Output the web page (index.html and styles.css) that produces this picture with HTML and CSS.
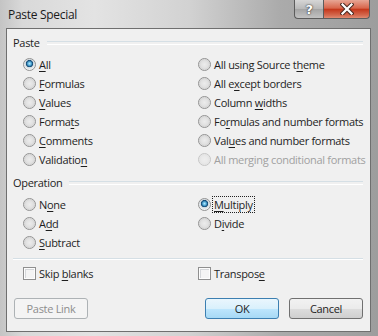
FILE: index.html
```html
<!DOCTYPE html>
<html lang="en">
<head>
  <meta charset="UTF-8">
  <title>Paste Special</title>
  <link rel="stylesheet" href="styles.css">
</head>
<body>
  <div class="window">
    <div class="titlebar">
      <span class="title">Paste Special</span>
      <div class="caption-btns">
        <span class="cap help">?</span>
        <span class="cap close">
          <svg width="14" height="12" viewBox="0 0 14 12">
            <path d="M2.5 1.5 L11.5 10.5 M11.5 1.5 L2.5 10.5" stroke="#4a2a22" stroke-width="4.2" stroke-linecap="square"/>
            <path d="M2.5 1.5 L11.5 10.5 M11.5 1.5 L2.5 10.5" stroke="#fff" stroke-width="2.2" stroke-linecap="square"/>
          </svg>
        </span>
      </div>
    </div>
    <div class="client">
      <div class="group-head"><span>Paste</span></div>
      <div class="opts paste-opts">
        <label class="opt"><span class="radio on"></span><span><u>A</u>ll</span></label>
        <label class="opt"><span class="radio"></span><span><u>F</u>ormulas</span></label>
        <label class="opt"><span class="radio"></span><span><u>V</u>alues</span></label>
        <label class="opt"><span class="radio"></span><span>Forma<u>t</u>s</span></label>
        <label class="opt"><span class="radio"></span><span><u>C</u>omments</span></label>
        <label class="opt"><span class="radio"></span><span>Validatio<u>n</u></span></label>
        <label class="opt"><span class="radio"></span><span>All using Source t<u>h</u>eme</span></label>
        <label class="opt"><span class="radio"></span><span>All e<u>x</u>cept borders</span></label>
        <label class="opt"><span class="radio"></span><span>Column <u>w</u>idths</span></label>
        <label class="opt"><span class="radio"></span><span>Fo<u>r</u>mulas and number formats</span></label>
        <label class="opt"><span class="radio"></span><span>Val<u>u</u>es and number formats</span></label>
        <label class="opt disabled"><span class="radio"></span><span>All merging conditional formats</span></label>
      </div>

      <div class="group-head op-head"><span>Operation</span></div>
      <div class="opts op-opts">
        <label class="opt"><span class="radio"></span><span>N<u>o</u>ne</span></label>
        <label class="opt"><span class="radio"></span><span>A<u>d</u>d</span></label>
        <label class="opt"><span class="radio"></span><span><u>S</u>ubtract</span></label>
        <label class="opt"><span class="radio on"></span><span class="focus"><u>M</u>ultiply</span></label>
        <label class="opt"><span class="radio"></span><span>D<u>i</u>vide</span></label>
      </div>

      <div class="sep"></div>
      <div class="opts checks">
        <label class="opt"><span class="check"></span><span>Skip <u>b</u>lanks</span></label>
        <label class="opt"><span class="check"></span><span>Transpos<u>e</u></span></label>
      </div>

      <div class="btn-row">
        <button class="btn" disabled>Paste Link</button>
        <button class="btn default">OK</button>
        <button class="btn">Cancel</button>
      </div>
    </div>
  </div>
</body>
</html>
```

FILE: styles.css
```css
* {margin:0; padding:0; box-sizing:border-box;}
body {width:378px; height:336px; overflow:hidden; font-family:"Open Sans", "Noto Sans", sans-serif; font-size:11px; letter-spacing:-0.3px; color:#1e1e1e;}

.window {width:378px; height:336px; display:flex; flex-direction:column; background:linear-gradient(to right, #c4c4c4 0, #d9d9d9 6%, #e3e3e3 25%, #d2d2d2 50%, #ababab 74%, #9d9d9d 100%);}

.titlebar {height:28px; display:flex; align-items:flex-start; padding-left:8px;}
.title {font-size:12px; line-height:16px; margin-top:7px; color:#1a1a1a;}
.caption-btns {display:flex; margin-left:auto; margin-right:8px; height:19px;}
.cap {display:flex; align-items:center; justify-content:center; height:19px; border:1px solid #5c5c5c; border-top:0;}
.help {width:29px; border-radius:0 0 0 4px; border-right:0; background:linear-gradient(#d6d6d6, #b8b8b8 50%, #a4a4a4 51%, #c2c2c2); color:#fff; font:bold 13px "DejaVu Sans", sans-serif; text-shadow:0 0 2px #333, 0 0 1px #333;}
.close {width:47px; border-radius:0 0 4px 0; background:linear-gradient(#e7a695, #d8664c 45%, #c5381c 52%, #d46a50 85%, #e08b72);}

.client {flex:1; margin:0 7px 4px 6px; border:1px solid #6f6f6f; background:#f0f0f0; padding:6px 7px 0 0;}

.group-head {display:flex; align-items:center; gap:7px; padding-left:6px; height:16px; line-height:16px;}
.group-head::after {content:''; flex:1; height:2px; border-top:1px solid #d5dfe5; border-bottom:1px solid #fff;}
.op-head {margin-top:6px;}

.opts {display:grid; grid-template-columns:175px 1fr; grid-auto-flow:column; padding-left:16px;}
.paste-opts {grid-template-rows:repeat(6, 19px); margin-top:4px;}
.op-opts {grid-template-rows:repeat(3, 19px); margin-top:4px;}
.checks {grid-template-rows:19px; margin-top:4px;}

.opt {display:flex; align-items:center; gap:3px; line-height:15px; white-space:nowrap;}
.opt u {text-decoration:underline; text-underline-offset:2px;}
.opt.disabled {color:#a0a0a0;}
.opt.disabled .radio {opacity:.45;}
.focus {outline:1px dotted #222; padding:0 1px; margin-left:-1px;}

.radio {width:13px; height:13px; flex:none; border-radius:50%; border:1px solid #929292; background:radial-gradient(circle at 50% 50%, #ececec 0, #e0e0e0 50%, #d4d4d4 62%, #fdfdfd 78%);}
.radio.on {background:radial-gradient(circle at 50% 42%, #b8ecff 0, #52a9d6 22%, #1d5f8f 34%, #17466d 40%, #cfd8de 46%, #fdfdfd 78%);}

.check {width:13px; height:13px; flex:none; border:1px solid #8f8f8f; background:#f4f4f4; box-shadow:inset 0 0 0 1px #fdfdfd, inset 1px 1px 0 1px #d5d7da;}

.sep {margin:6px 0 0 6px; height:2px; border-top:1px solid #d5dfe5; border-bottom:1px solid #fff;}

.btn-row {display:flex; margin-top:15px; padding-left:7px;}
.btn {width:74px; height:21px; font:11px "Open Sans", "Noto Sans", sans-serif; letter-spacing:-0.3px; color:#1e1e1e; border:1px solid #707070; border-radius:3px; background:linear-gradient(#f2f2f2, #ebebeb 50%, #dddddd 51%, #cfcfcf);}
.btn[disabled] {color:#8d8d8d; border-color:#adb2b5; background:#f4f4f4;}
.btn.default {margin-left:auto; border-color:#3c7fb1; background:linear-gradient(#eaf6fd, #d9f0fc 50%, #bee6fd 51%, #a7d9f5);}
.btn + .btn + .btn {margin-left:10px;}
```
